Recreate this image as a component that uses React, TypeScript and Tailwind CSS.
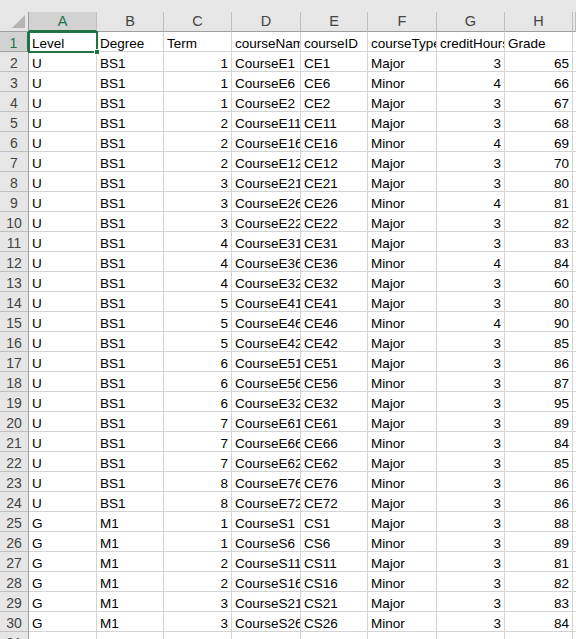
import React from 'react';

type Row = [string, string, number, string, string, string, number, number];

const rows: Row[] = [
  ['U', 'BS1', 1, 'CourseE1', 'CE1', 'Major', 3, 65],
  ['U', 'BS1', 1, 'CourseE6', 'CE6', 'Minor', 4, 66],
  ['U', 'BS1', 1, 'CourseE2', 'CE2', 'Major', 3, 67],
  ['U', 'BS1', 2, 'CourseE11', 'CE11', 'Major', 3, 68],
  ['U', 'BS1', 2, 'CourseE16', 'CE16', 'Minor', 4, 69],
  ['U', 'BS1', 2, 'CourseE12', 'CE12', 'Major', 3, 70],
  ['U', 'BS1', 3, 'CourseE21', 'CE21', 'Major', 3, 80],
  ['U', 'BS1', 3, 'CourseE26', 'CE26', 'Minor', 4, 81],
  ['U', 'BS1', 3, 'CourseE22', 'CE22', 'Major', 3, 82],
  ['U', 'BS1', 4, 'CourseE31', 'CE31', 'Major', 3, 83],
  ['U', 'BS1', 4, 'CourseE36', 'CE36', 'Minor', 4, 84],
  ['U', 'BS1', 4, 'CourseE32', 'CE32', 'Major', 3, 60],
  ['U', 'BS1', 5, 'CourseE41', 'CE41', 'Major', 3, 80],
  ['U', 'BS1', 5, 'CourseE46', 'CE46', 'Minor', 4, 90],
  ['U', 'BS1', 5, 'CourseE42', 'CE42', 'Major', 3, 85],
  ['U', 'BS1', 6, 'CourseE51', 'CE51', 'Major', 3, 86],
  ['U', 'BS1', 6, 'CourseE56', 'CE56', 'Minor', 3, 87],
  ['U', 'BS1', 6, 'CourseE32', 'CE32', 'Major', 3, 95],
  ['U', 'BS1', 7, 'CourseE61', 'CE61', 'Major', 3, 89],
  ['U', 'BS1', 7, 'CourseE66', 'CE66', 'Minor', 3, 84],
  ['U', 'BS1', 7, 'CourseE62', 'CE62', 'Major', 3, 85],
  ['U', 'BS1', 8, 'CourseE76', 'CE76', 'Minor', 3, 86],
  ['U', 'BS1', 8, 'CourseE72', 'CE72', 'Major', 3, 86],
  ['G', 'M1', 1, 'CourseS1', 'CS1', 'Major', 3, 88],
  ['G', 'M1', 1, 'CourseS6', 'CS6', 'Minor', 3, 89],
  ['G', 'M1', 2, 'CourseS11', 'CS11', 'Major', 3, 81],
  ['G', 'M1', 2, 'CourseS16', 'CS16', 'Minor', 3, 82],
  ['G', 'M1', 3, 'CourseS21', 'CS21', 'Major', 3, 83],
  ['G', 'M1', 3, 'CourseS26', 'CS26', 'Minor', 3, 84],
];

const headers = ['Level', 'Degree', 'Term', 'courseName', 'courseID', 'courseType', 'creditHours', 'Grade'];
const letters = ['A', 'B', 'C', 'D', 'E', 'F', 'G', 'H', ''];

const gridCols = 'grid grid-cols-[29px_68px_67px_68px_69px_67px_69px_68px_68px_1fr]';

const Cell: React.FC<{ value?: string | number; right?: boolean }> = ({ value, right }) => (
  <div
    className={`h-5 border-r border-b border-[#d4d4d4] bg-white flex items-end overflow-hidden whitespace-nowrap px-[3px] pb-[1px] ${
      right ? 'justify-end' : 'justify-start'
    }`}
  >
    {value}
  </div>
);

const RowHead: React.FC<{ n: number; active?: boolean }> = ({ n, active }) => (
  <div
    className={`h-5 flex items-end justify-center pb-[1px] border-b text-[14px] ${
      active
        ? 'bg-[#d2d2d2] border-r-2 border-r-[#217346] border-b-[#9e9e9e] text-[#217346]'
        : 'bg-[#e6e6e6] text-[#444] border-r border-r-[#9e9e9e] border-b-[#bfbfbf]'
    }`}
  >
    {n}
  </div>
);

export default function App() {
  return (
    <div
      className="w-[576px] h-[639px] overflow-hidden bg-[#e6e6e6] text-[13.5px] leading-none text-black relative"
      style={{ fontFamily: '"Liberation Sans", Arial, sans-serif' }}
    >
      <div className="h-3 bg-[#e6e6e6]" />

      {/* column letters */}
      <div className={`${gridCols} h-5`}>
        <div className="relative bg-[#e6e6e6] border-r border-b border-[#9e9e9e]">
          <div className="absolute right-[3px] bottom-[3px] w-0 h-0 border-l-[13px] border-l-transparent border-b-[13px] border-b-[#b4b4b4]" />
        </div>
        {letters.map((l, i) => (
          <div
            key={i}
            className={`flex items-center justify-center border-b text-[14.5px] ${
              i === 0
                ? 'bg-[#d2d2d2] text-[#217346] border-b-2 border-b-[#217346] border-r border-r-[#bfbfbf]'
                : 'bg-[#e6e6e6] text-[#444] border-r border-r-[#bfbfbf] border-b-[#9e9e9e]'
            }`}
          >
            {l}
          </div>
        ))}
      </div>

      {/* row 1 with the selected cell */}
      <div className={`${gridCols} relative`}>
        <RowHead n={1} active />
        {headers.map((h) => (
          <Cell key={h} value={h} />
        ))}
        <Cell />
        <div className="absolute left-[28px] top-[-1px] w-[70px] h-[22px] border-2 border-[#217346] pointer-events-none">
          <div className="absolute right-[-4px] bottom-[-4px] w-[6px] h-[6px] bg-[#217346] border border-white" />
        </div>
      </div>

      {rows.map((r, i) => (
        <div key={i} className={gridCols}>
          <RowHead n={i + 2} />
          <Cell value={r[0]} />
          <Cell value={r[1]} />
          <Cell value={r[2]} right />
          <Cell value={r[3]} />
          <Cell value={r[4]} />
          <Cell value={r[5]} />
          <Cell value={r[6]} right />
          <Cell value={r[7]} right />
          <Cell />
        </div>
      ))}

      <div className={gridCols}>
        <RowHead n={31} />
        {letters.map((_, i) => (
          <Cell key={i} />
        ))}
      </div>
    </div>
  );
}
